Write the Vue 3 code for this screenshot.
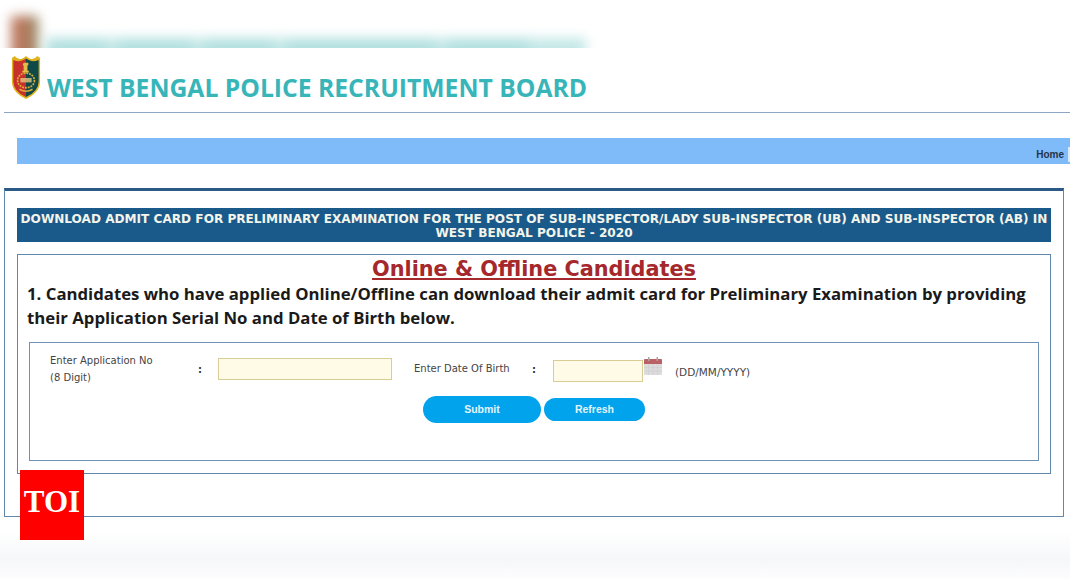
<script setup>
const blurBlocks = [
  { id: 1, w: 60 },
  { id: 2, w: 74 },
  { id: 3, w: 70 },
  { id: 4, w: 150 },
  { id: 5, w: 80 }
]
</script>

<template>
  <div class="page">
    <div class="ghost">
      <div class="ghost-logo"></div>
      <div class="ghost-text">
        <span v-for="b in blurBlocks" :key="b.id" class="ghost-word" :style="{ width: b.w + 'px' }"></span>
      </div>
    </div>

    <header class="brand">
      <svg class="crest" viewBox="0 0 32 46" width="30" height="45" preserveAspectRatio="none">
        <path d="M1 3 L4 1 Q7 5 11 4 Q14 3 16 1 Q18 3 21 4 Q25 5 28 1 L31 3 L31 27 Q31 38 16 45 Q1 38 1 27 Z" fill="#e0b31e" />
        <path d="M2.500 5 Q7 7 11 6 Q14 5 16 3.500 L16 43 Q2.500 37 2.500 27 Z" fill="#c8302c" />
        <path d="M29.500 5 Q25 7 21 6 Q18 5 16 3.500 L16 43 Q29.500 37 29.500 27 Z" fill="#0f4a48" />
        <path d="M13.500 8 h5 v2 l-1 1 v5 h1.500 v2 h-7 v-2 h1.500 v-5 l-1 -1 Z" fill="#e2bb4a" />
        <ellipse cx="16" cy="26" rx="9" ry="7.500" fill="none" stroke="#d8ad3c" stroke-width="1.800" stroke-dasharray="2 1" />
        <rect x="10" y="23.500" width="12" height="4.500" fill="#e6c77a" opacity="0.8" />
        <path d="M9 35 Q16 39 23 35" fill="none" stroke="#d8ad3c" stroke-width="1.500" />
      </svg>
      <h1 class="brand-name">WEST BENGAL POLICE RECRUITMENT BOARD</h1>
    </header>
    <div class="brand-rule"></div>

    <nav class="navbar">
      <a class="nav-link">Home</a>
      <span class="nav-end"></span>
    </nav>

    <main class="outer">
      <div class="banner">
        DOWNLOAD ADMIT CARD FOR PRELIMINARY EXAMINATION FOR THE POST OF SUB-INSPECTOR/LADY SUB-INSPECTOR (UB) AND SUB-INSPECTOR (AB) IN WEST BENGAL POLICE - 2020
      </div>

      <section class="inner">
        <h2 class="heading">Online &amp; Offline Candidates</h2>
        <p class="notice">
          1. Candidates who have applied Online/Offline can download their admit card for Preliminary Examination by providing their Application Serial No and Date of Birth below.
        </p>

        <form class="form-box" @submit.prevent>
          <div class="form-row">
            <label class="lbl-app">Enter Application No<br />(8 Digit)</label>
            <span class="colon colon-app">:</span>
            <input class="field field-app" type="text" />
            <label class="lbl-dob">Enter Date Of Birth</label>
            <span class="colon colon-dob">:</span>
            <input class="field field-dob" type="text" />
            <svg class="cal" viewBox="0 0 18 18" width="18" height="18">
              <rect x="0" y="2" width="18" height="16" rx="1" fill="#dcdcdc" />
              <path d="M0 3 a1 1 0 0 1 1 -1 h16 a1 1 0 0 1 1 1 v4 H0 Z" fill="#bb6065" />
              <rect x="4" y="0" width="1.500" height="4" fill="#a8a8a8" />
              <rect x="12.500" y="0" width="1.500" height="4" fill="#a8a8a8" />
              <path d="M0 10.500 H18 M0 14 H18 M4.500 7 V18 M9 7 V18 M13.500 7 V18" stroke="#cacaca" stroke-width="0.500" />
            </svg>
            <span class="hint">(DD/MM/YYYY)</span>
          </div>
          <div class="actions">
            <button class="btn btn-submit" type="submit">Submit</button>
            <button class="btn btn-refresh" type="button">Refresh</button>
          </div>
        </form>
      </section>
    </main>

    <div class="fog"></div>

    <div class="toi">TOI</div>
  </div>
</template>

<style scoped>
.page {
  position: relative;
  width: 1070px;
  height: 579px;
  overflow: hidden;
  background: #fff;
}

.ghost {
  position: relative;
  height: 48px;
  overflow: hidden;
}

.ghost-logo {
  position: absolute;
  left: 11px;
  top: 16px;
  width: 27px;
  height: 50px;
  background: linear-gradient(90deg, #c07a60 0%, #b5795f 55%, #8c8a60 100%);
  filter: blur(6px);
}

.ghost-text {
  position: absolute;
  left: 46px;
  top: 38px;
  width: 540px;
  height: 26px;
  display: flex;
  gap: 12px;
  background: #c4e8e7;
  filter: blur(6px);
}

.ghost-word {
  height: 26px;
  background: #b2e0df;
}

.brand {
  height: 64px;
  display: flex;
  align-items: flex-start;
  padding-left: 10px;
}

.crest {
  margin: 7px 0 0 1px;
  flex: none;
}

.brand-name {
  margin: 24px 0 0 6px;
  font-family: "Open Sans", sans-serif;
  font-size: 24.700px;
  font-weight: 700;
  line-height: 32px;
  color: #38b5b8;
  white-space: nowrap;
}

.brand-rule {
  height: 1px;
  margin-left: 4px;
  background: #8ca6c4;
}

.navbar {
  height: 26px;
  margin: 25px 0 0 17px;
  background: #7fbbf8;
  display: flex;
  justify-content: flex-end;
  align-items: flex-end;
}

.nav-link {
  font-family: "Liberation Sans", sans-serif;
  font-size: 10px;
  font-weight: 700;
  line-height: 18px;
  color: #25334a;
  margin-right: 4px;
}

.nav-end {
  width: 2px;
  height: 15px;
  margin-bottom: 2px;
  background: #dcebfb;
}

.outer {
  width: 1060px;
  height: 329px;
  box-sizing: border-box;
  margin: 24px 0 0 4px;
  padding: 17px 12px 0;
  border: 1px solid #6088ad;
  border-top: 3px solid #2a5a85;
}

.banner {
  height: 34px;
  box-sizing: border-box;
  padding: 4px 2px 0;
  background: #1a5a8a;
  color: #f4f4ea;
  font-family: "DejaVu Sans", sans-serif;
  font-size: 12.100px;
  font-weight: 700;
  line-height: 14px;
  text-align: center;
}

.inner {
  height: 220px;
  box-sizing: border-box;
  margin-top: 12px;
  padding: 0 11px;
  border: 1px solid #6088ad;
}

.heading {
  margin: 0;
  padding-top: 2px;
  font-family: "DejaVu Sans", sans-serif;
  font-size: 20.800px;
  font-weight: 700;
  line-height: 25px;
  color: #a5282c;
  text-align: center;
  text-decoration: underline;
}

.notice {
  margin: 0 0 0 -2px;
  font-family: "Open Sans", sans-serif;
  font-size: 16.750px;
  font-weight: 700;
  line-height: 24px;
  color: #1a1a1a;
}

.form-box {
  height: 119px;
  box-sizing: border-box;
  margin: 12px 0 0 0;
  border: 1px solid #6f8fb3;
}

.form-row {
  display: flex;
  align-items: flex-start;
  height: 53px;
  font-family: "DejaVu Sans", sans-serif;
  font-size: 10px;
  color: #444;
}

.lbl-app {
  width: 147px;
  margin: 9px 0 0 20px;
  line-height: 17px;
  flex: none;
}

.colon {
  flex: none;
  width: 4px;
  font-weight: 700;
  line-height: 14px;
  color: #333;
}

.colon-app {
  margin: 20px 0 0 1px;
}

.colon-dob {
  margin-top: 20px;
}

.field {
  box-sizing: border-box;
  height: 22px;
  padding: 0;
  background: #fffbe6;
  border: 1px solid #d8cd94;
  border-radius: 0;
  outline: none;
  flex: none;
}

.field-app {
  width: 174px;
  margin: 15px 0 0 16px;
}

.lbl-dob {
  width: 118px;
  margin: 19px 0 0 22px;
  line-height: 14px;
  flex: none;
}

.field-dob {
  width: 90px;
  margin: 17px 0 0 17px;
}

.cal {
  margin: 14px 0 0 1px;
  flex: none;
}

.hint {
  margin: 22px 0 0 13px;
  font-size: 10.500px;
  line-height: 14px;
  white-space: nowrap;
}

.actions {
  display: flex;
  align-items: center;
  height: 27px;
  padding-left: 393px;
  gap: 3px;
}

.btn {
  box-sizing: border-box;
  border: none;
  padding: 0 0 2px;
  background: #00a3ec;
  color: #e4f4fd;
  font-family: "Liberation Sans", sans-serif;
  font-size: 10.500px;
  font-weight: 700;
  cursor: pointer;
}

.btn-submit {
  width: 118px;
  height: 27px;
  border-radius: 14px;
}

.btn-refresh {
  width: 101px;
  height: 23px;
  border-radius: 12px;
}

.fog {
  height: 48px;
  margin-top: 14px;
  background: linear-gradient(180deg, #fff 0%, #f6f7f9 60%, #fdfdfe 100%);
}

.toi {
  position: absolute;
  left: 20px;
  top: 470px;
  width: 64px;
  height: 70px;
  background: #f00;
  color: #fff;
  font-family: "Liberation Serif", serif;
  font-size: 31px;
  font-weight: 700;
  line-height: 63px;
  text-align: center;
}
</style>

<style>
html, body {
  margin: 0;
  background: #fff;
}
</style>
